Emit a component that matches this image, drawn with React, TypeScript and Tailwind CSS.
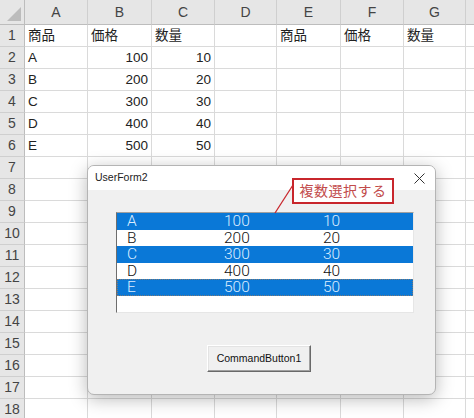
import React from "react";

const font = { fontFamily: '"Liberation Sans", "Noto Sans CJK JP", sans-serif' };
const listFont = { fontFamily: 'Roboto, "Liberation Sans", sans-serif' };

const cols = ["A", "B", "C", "D", "E", "F", "G", ""];

type Cell = { t: string; r?: boolean };
const data: Record<number, Cell[]> = {
  1: [{ t: "商品" }, { t: "価格" }, { t: "数量" }, { t: "" }, { t: "商品" }, { t: "価格" }, { t: "数量" }, { t: "" }],
  2: [{ t: "A" }, { t: "100", r: true }, { t: "10", r: true }],
  3: [{ t: "B" }, { t: "200", r: true }, { t: "20", r: true }],
  4: [{ t: "C" }, { t: "300", r: true }, { t: "30", r: true }],
  5: [{ t: "D" }, { t: "400", r: true }, { t: "40", r: true }],
  6: [{ t: "E" }, { t: "500", r: true }, { t: "50", r: true }],
};

const listRows = [
  { a: "A", b: "100", c: "10", sel: true },
  { a: "B", b: "200", c: "20", sel: false },
  { a: "C", b: "300", c: "30", sel: true },
  { a: "D", b: "400", c: "40", sel: false },
  { a: "E", b: "500", c: "50", sel: true, focus: true },
];

export default function App() {
  const rows = Array.from({ length: 18 }, (_, i) => i + 1);
  return (
    <div className="relative w-[474px] h-[418px] overflow-hidden bg-white" style={font}>
      {/* Sheet grid */}
      <div className="grid grid-cols-[25px_63px_64px_63px_62px_64px_63px_62px_40px] grid-rows-[25px_repeat(18,22px)]">
        {/* corner */}
        <div className="relative bg-[#e6e6e6] border-r border-b border-[#bdbdbd]">
          <svg className="absolute right-[3px] bottom-[3px]" width="14" height="14" viewBox="0 0 14 14">
            <polygon points="14,0 14,14 0,14" fill="#bcbcbc" />
          </svg>
        </div>
        {cols.map((c, i) => (
          <div
            key={"h" + i}
            className="flex items-center justify-center bg-[#e6e6e6] border-r border-b border-r-[#cfcfcf] border-b-[#bdbdbd] text-[14px] text-[#444]"
          >
            {c}
          </div>
        ))}
        {rows.map((r) => (
          <React.Fragment key={r}>
            <div className="flex items-center justify-center bg-[#e6e6e6] border-r border-b border-r-[#bdbdbd] border-b-[#cfcfcf] text-[14px] text-[#444]">
              {r}
            </div>
            {cols.map((_, ci) => {
              const cell = data[r]?.[ci];
              return (
                <div
                  key={ci}
                  className={
                    "flex items-center border-r border-b border-[#dadada] px-[3px] pt-[1px] text-[13.5px] text-[#222] whitespace-nowrap " +
                    (cell?.r ? "justify-end" : "justify-start")
                  }
                >
                  {cell?.t ?? ""}
                </div>
              );
            })}
          </React.Fragment>
        ))}
      </div>

      {/* UserForm dialog */}
      <div className="absolute left-[87px] top-[165px] w-[349px] h-[230px] rounded-[7px] border border-[#b4b4b4] bg-[#f0f0f0] shadow-[0_4px_18px_rgba(0,0,0,0.28)] overflow-hidden flex flex-col">
        <div className="h-[24px] bg-white flex items-center justify-between pl-[7px] pr-[8px] shrink-0">
          <span className="text-[10.5px] text-[#222]">UserForm2</span>
          <svg width="11" height="11" viewBox="0 0 11 11" className="mr-[2px]">
            <path d="M0.5 0.5 L10.5 10.5 M10.5 0.5 L0.5 10.5" stroke="#333" strokeWidth="1" />
          </svg>
        </div>
        {/* ListBox */}
        <div className="ml-[28px] mt-[22px] w-[298px] h-[101px] bg-white border-l border-t border-l-[#6d6d6d] border-t-[#a0a0a0] border-r border-b border-r-[#e6e6e6] border-b-[#e6e6e6] flex flex-col" style={listFont}>
          {listRows.map((row, i) => (
            <div
              key={i}
              className={
                "h-[16.5px] grid grid-cols-[97px_99px_1fr] pl-[10px] items-center text-[15.5px] font-light leading-[16.5px] overflow-hidden " +
                (row.sel ? "bg-[#0a78d7] text-[#dcedff] " : "text-[#111] ") +
                (row.focus ? "outline outline-1 outline-dotted outline-[#7a7a7a] -outline-offset-1" : "")
              }
            >
              <span>{row.a}</span>
              <span>{row.b}</span>
              <span>{row.c}</span>
            </div>
          ))}
        </div>
        {/* CommandButton */}
        <div className="ml-[119px] mt-[32px] w-[104px] h-[27px] flex items-center justify-center bg-[#f0f0f0] border border-t-[#ffffff] border-l-[#ffffff] border-r-[#696969] border-b-[#696969] shadow-[inset_-1px_-1px_0_#a0a0a0,inset_1px_1px_0_#e3e3e3] text-[10.5px] text-[#111]">
          CommandButton1
        </div>
      </div>

      {/* Callout */}
      <svg className="absolute left-[270px] top-[180px]" width="26" height="36" viewBox="0 0 26 36">
        <line x1="5" y1="33" x2="23" y2="5" stroke="#c8262c" strokeWidth="1.3" />
      </svg>
      <div className="absolute left-[292px] top-[178px] w-[102px] h-[26px] bg-white border-2 border-[#c8262c] flex items-center justify-center text-[14px] text-[#c24b4b] tracking-[0.5px]">
        複数選択する
      </div>
    </div>
  );
}
